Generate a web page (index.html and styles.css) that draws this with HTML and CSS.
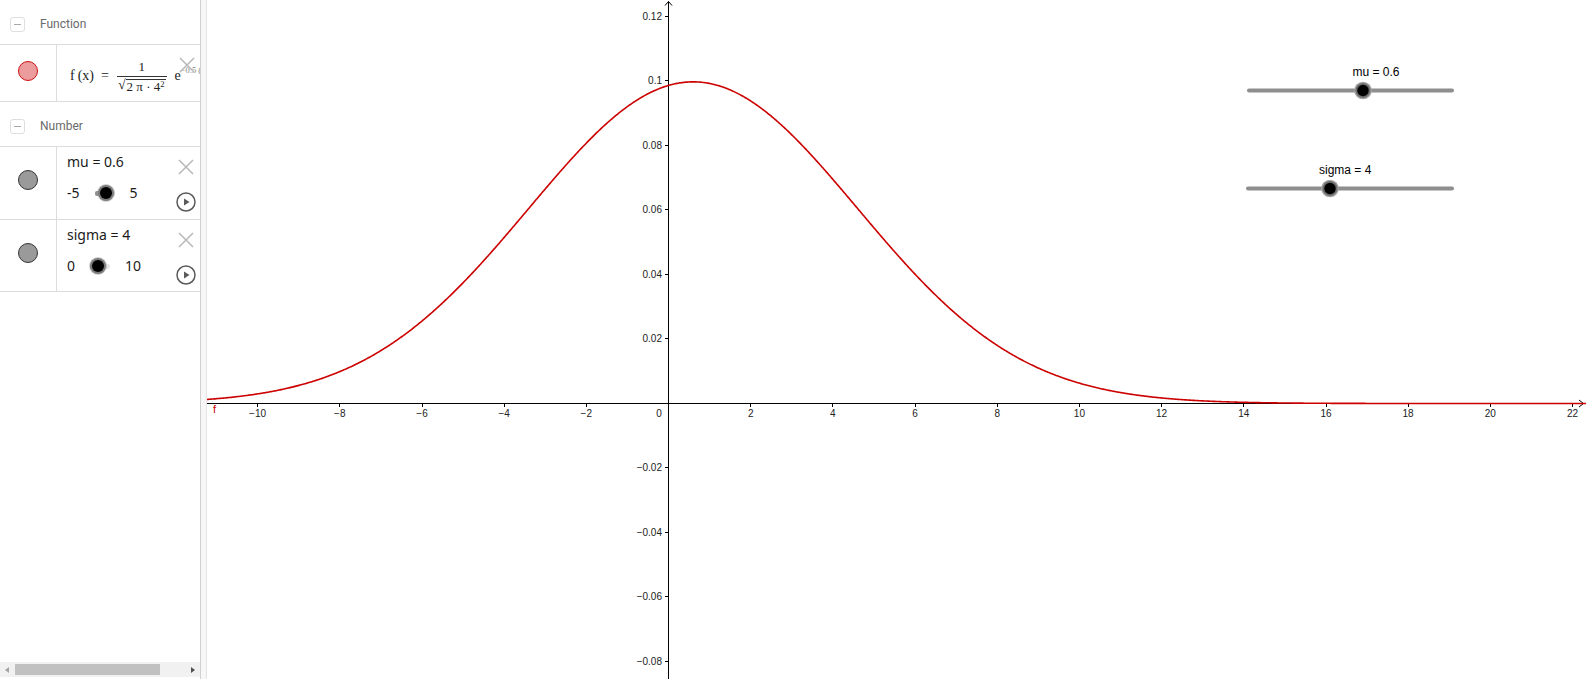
FILE: index.html
```html
<!DOCTYPE html>
<html lang="en">
<head>
<meta charset="utf-8">
<title>Normal distribution</title>
<link rel="stylesheet" href="styles.css">
</head>
<body>
<div class="app">
  <aside class="algebra">
    <div class="group-head"><span class="toggle"></span><span>Function</span></div>
    <div class="item item-fn">
      <div class="marker"><span class="dot dot-fn"></span></div>
      <div class="content">
        <div class="formula">
          <span class="f">f</span><span>(x)</span><span class="eq">=</span>
          <span class="frac">
            <span class="num">1</span>
            <span class="bar"></span>
            <span class="den"><span class="sqrt">√</span><span class="rad">2 π · 4<sup>2</sup></span></span>
          </span>
          <span class="exp">e<sup>−0.5 ((x − 0.6) / 4)</sup></span>
        </div>
      </div>
      <svg class="close close-abs" width="16" height="16" viewBox="0 0 16 16"><path d="M1 1L15 15M15 1L1 15"/></svg>
    </div>

    <div class="group-head"><span class="toggle"></span><span>Number</span></div>
    <div class="item item-num">
      <div class="marker"><span class="dot dot-num"></span></div>
      <div class="content">
        <div class="label">mu = 0.6</div>
        <div class="slider">
          <span>-5</span>
          <span class="track"><span class="track-fill" style="width:56%"></span><span class="knob" style="left:56%"></span></span>
          <span>5</span>
        </div>
      </div>
      <div class="controls">
        <svg class="close" width="16" height="16" viewBox="0 0 16 16"><path d="M1 1L15 15M15 1L1 15"/></svg>
        <svg class="play" width="20" height="20" viewBox="0 0 20 20"><circle cx="10" cy="10" r="9"/><path d="M8 6.5L13.5 10L8 13.5Z"/></svg>
      </div>
    </div>
    <div class="item item-num last">
      <div class="marker"><span class="dot dot-num"></span></div>
      <div class="content">
        <div class="label">sigma = 4</div>
        <div class="slider">
          <span>0</span>
          <span class="track"><span class="track-fill" style="width:40%"></span><span class="knob" style="left:40%"></span></span>
          <span>10</span>
        </div>
      </div>
      <div class="controls">
        <svg class="close" width="16" height="16" viewBox="0 0 16 16"><path d="M1 1L15 15M15 1L1 15"/></svg>
        <svg class="play" width="20" height="20" viewBox="0 0 20 20"><circle cx="10" cy="10" r="9"/><path d="M8 6.5L13.5 10L8 13.5Z"/></svg>
      </div>
    </div>

    <div class="fill"></div>
    <div class="hscroll">
      <span class="arrow-l"></span>
      <span class="thumb"></span>
      <span class="fill"></span>
      <span class="arrow-r"></span>
    </div>
  </aside>

  <div class="splitter"></div>

  <main class="graphics">
    <svg class="plot" width="1379" height="679" viewBox="207 0 1379 679">
      <g class="axis">
        <line x1="207" y1="403.5" x2="1583" y2="403.5"/>
        <polyline points="1579,400 1583.5,403.5 1579,407"/>
        <line x1="668.5" y1="679" x2="668.5" y2="1.5"/>
        <polyline points="665,5.5 668.5,1.5 672,5.5"/>
        <path d="M257.5 403.5v3.5M339.5 403.5v3.5M422.5 403.5v3.5M504.5 403.5v3.5M586.5 403.5v3.5M750.5 403.5v3.5M832.5 403.5v3.5M915.5 403.5v3.5M997.5 403.5v3.5M1079.5 403.5v3.5M1161.5 403.5v3.5M1243.5 403.5v3.5M1326.5 403.5v3.5M1408.5 403.5v3.5M1490.5 403.5v3.5M1572.5 403.5v3.5"/>
        <path d="M665 16.5h3.5M665 80.5h3.5M665 145.5h3.5M665 209.5h3.5M665 274.5h3.5M665 338.5h3.5M665 467.5h3.5M665 532.5h3.5M665 596.5h3.5M665 661.5h3.5"/>
      </g>
      <g class="tick-label xlab">
        <text x="257.6" y="417">−10</text>
        <text x="339.8" y="417">−8</text>
        <text x="422" y="417">−6</text>
        <text x="504.1" y="417">−4</text>
        <text x="586.3" y="417">−2</text>
        <text x="659" y="417">0</text>
        <text x="750.7" y="417">2</text>
        <text x="832.9" y="417">4</text>
        <text x="915" y="417">6</text>
        <text x="997.2" y="417">8</text>
        <text x="1079.4" y="417">10</text>
        <text x="1161.6" y="417">12</text>
        <text x="1243.8" y="417">14</text>
        <text x="1326" y="417">16</text>
        <text x="1408.1" y="417">18</text>
        <text x="1490.3" y="417">20</text>
        <text x="1572.5" y="417">22</text>
      </g>
      <g class="tick-label ylab">
        <text x="662" y="20.1">0.12</text>
        <text x="662" y="84.1">0.1</text>
        <text x="662" y="149.1">0.08</text>
        <text x="662" y="213.1">0.06</text>
        <text x="662" y="278.1">0.04</text>
        <text x="662" y="342.1">0.02</text>
        <text x="662" y="471.1">−0.02</text>
        <text x="662" y="536.1">−0.04</text>
        <text x="662" y="600.1">−0.06</text>
        <text x="662" y="665.1">−0.08</text>
      </g>
      <path id="curve" class="curve" d="M207 399"/>
      <text class="curve-name" x="213" y="413">f</text>

      <g class="gslider">
        <text class="s-label" x="1352.5" y="75.5">mu = 0.6</text>
        <line class="s-track" x1="1249" y1="90.5" x2="1452" y2="90.5"/>
        <circle class="s-halo" cx="1363" cy="90.5" r="8.8"/>
        <circle class="s-ring" cx="1363" cy="90.5" r="7.6"/>
        <circle class="s-core" cx="1363" cy="90.5" r="5.7"/>
      </g>
      <g class="gslider">
        <text class="s-label" x="1319" y="173.5">sigma = 4</text>
        <line class="s-track" x1="1248" y1="188.5" x2="1452" y2="188.5"/>
        <circle class="s-halo" cx="1330" cy="188.5" r="8.8"/>
        <circle class="s-ring" cx="1330" cy="188.5" r="7.6"/>
        <circle class="s-core" cx="1330" cy="188.5" r="5.7"/>
      </g>
    </svg>
  </main>
</div>
<script src="script.js"></script>
</body>
</html>
```

FILE: styles.css
```css
* { box-sizing: border-box; }
html, body { margin: 0; padding: 0; }
body {
  width: 1586px;
  height: 679px;
  overflow: hidden;
  background: #fff;
  font-family: "Noto Sans", "DejaVu Sans", sans-serif;
  color: #1a1a1a;
}
.app { display: flex; height: 679px; }

/* ---------- algebra view ---------- */
.algebra {
  width: 200px;
  flex: none;
  display: flex;
  flex-direction: column;
  background: #fff;
  overflow: hidden;
}
.group-head {
  height: 45px;
  flex: none;
  padding: 4px 0 0 10px;
  display: flex;
  align-items: center;
  gap: 15px;
  border-bottom: 1px solid #dcdcdc;
  font-family: Roboto, "Noto Sans", sans-serif;
  font-size: 12px;
  color: #6a6a6a;
}
.toggle {
  width: 15px;
  height: 15px;
  border: 1px solid #dedede;
  border-radius: 3px;
  display: flex;
  align-items: center;
  justify-content: center;
}
.toggle::before {
  content: "";
  width: 7px;
  height: 1px;
  background: #a8a8a8;
}
.item {
  position: relative;
  display: flex;
  flex: none;
  border-bottom: 1px solid #dcdcdc;
  overflow: hidden;
}
.item-fn { height: 57px; }
.item-num { height: 73px; }
.item-num.last { height: 72px; }
.marker {
  width: 57px;
  flex: none;
  border-right: 1px solid #dcdcdc;
  display: flex;
  justify-content: center;
  align-items: flex-start;
  padding-top: 23px;
}
.item-fn .marker { padding-top: 16px; }
.dot {
  width: 20px;
  height: 20px;
  border-radius: 50%;
}
.dot-fn { background: #ec9c9c; border: 1px solid #cc1111; }
.dot-num { background: #9a9a9a; border: 1px solid #333; }

.content {
  flex: 1;
  min-width: 0;
  padding: 5px 0 0 10px;
}
.item-fn .content {
  padding: 6px 0 0 13px;
  display: flex;
  align-items: center;
  white-space: nowrap;
}

/* formula */
.formula {
  display: flex;
  align-items: center;
  font-family: "Liberation Serif", "DejaVu Serif", serif;
  font-size: 14px;
  line-height: 14px;
  color: #222;
  white-space: nowrap;
}
.f { margin-right: 3px; }
.eq { margin: 0 8px 0 7px; }
.frac {
  display: flex;
  flex-direction: column;
  align-items: center;
  font-size: 13px;
}
.num { line-height: 14px; padding-bottom: 2px; }
.bar { align-self: stretch; height: 1px; background: #333; }
.den {
  display: flex;
  align-items: flex-start;
  padding: 2px 1px 0;
  line-height: 14px;
}
.sqrt { font-size: 14px; line-height: 14px; margin-top: -1px; }
.rad {
  border-top: 1px solid #333;
  line-height: 13px;
  padding: 0 1px;
}
.rad sup { font-size: 8.5px; line-height: 0; vertical-align: 4px; }
.exp { margin-left: 8px; }
.exp sup { font-size: 8.5px; line-height: 0; vertical-align: 7px; color: #888; }

/* numbers */
.label { font-size: 14px; line-height: 20px; }
.slider {
  display: flex;
  align-items: center;
  height: 20px;
  margin-top: 11px;
  font-size: 14px;
  line-height: 20px;
}
.track {
  position: relative;
  width: 20px;
  height: 5px;
  margin: 0 15px 0 15px;
  background: #e6e6e6;
  border-radius: 2px;
}
.track-fill {
  position: absolute;
  left: 0;
  top: 0;
  bottom: 0;
  background: #8f8f8f;
  border-radius: 2px;
}
.knob {
  position: absolute;
  top: 50%;
  width: 12px;
  height: 12px;
  margin: -6px 0 0 -6px;
  border-radius: 50%;
  background: #000;
  box-shadow: 0 0 0 2px #7b7b7b, 0 0 0 3px rgba(160, 160, 160, 0.5);
}
.controls {
  flex: none;
  width: 20px;
  margin-right: 4px;
  display: flex;
  flex-direction: column;
  align-items: center;
  padding-top: 12px;
  gap: 17px;
}
.close path { stroke: #b8b8b8; stroke-width: 1.5; fill: none; }
.close-abs { position: absolute; top: 12px; right: 5px; }
.play circle { fill: none; stroke: #5a5a5a; stroke-width: 1.5; }
.play path { fill: #5a5a5a; }

.fill { flex: 1; }
.hscroll {
  flex: none;
  height: 15px;
  margin-bottom: 2px;
  background: #f1f1f1;
  display: flex;
  align-items: center;
}
.arrow-l {
  width: 0;
  height: 0;
  border-style: solid;
  border-width: 3.5px 4px 3.5px 0;
  border-color: transparent #a3a3a3 transparent transparent;
  margin: 0 6px 0 5px;
}
.thumb { width: 145px; height: 11px; background: #c1c1c1; }
.arrow-r {
  width: 0;
  height: 0;
  border-style: solid;
  border-width: 3.5px 0 3.5px 4px;
  border-color: transparent transparent transparent #505050;
  margin-right: 5px;
}

.splitter {
  width: 7px;
  flex: none;
  background: #f7f7f7;
  border-left: 1px solid #d0d0d0;
  border-right: 1px solid #e4e4e4;
}

/* ---------- graphics view ---------- */
.graphics { flex: 1; min-width: 0; background: #fff; }
.plot { display: block; }
.axis { stroke: #000; stroke-width: 1; fill: none; }
.tick-label {
  font-family: "Liberation Sans", Arial, sans-serif;
  font-size: 10px;
  fill: #222;
}
.xlab { text-anchor: middle; }
.ylab { text-anchor: end; }
.curve { fill: none; stroke: #cc0000; stroke-width: 1.6; }
.curve-name {
  font-family: "Liberation Sans", Arial, sans-serif;
  font-size: 11px;
  fill: #cc0000;
}
.s-label {
  font-family: "Liberation Sans", Arial, sans-serif;
  font-size: 12px;
  fill: #000;
}
.s-track { stroke: #8e8e8e; stroke-width: 4; stroke-linecap: round; }
.s-halo { fill: #a6a6a6; }
.s-ring { fill: #6e6e6e; }
.s-core { fill: #000; }
```

FILE: script.js
```js
(function () {
  var x0 = 668.5, y0 = 403.5, ux = 41.09, uy = 3225;
  var mu = 0.6, s = 4;
  var k = 1 / Math.sqrt(2 * Math.PI * s * s);
  var d = '';
  for (var px = 207; px <= 1586; px += 1) {
    var x = (px - x0) / ux;
    var y = k * Math.exp(-0.5 * Math.pow((x - mu) / s, 2));
    var py = y0 - y * uy;
    d += (px === 207 ? 'M' : 'L') + px + ' ' + py.toFixed(2);
  }
  document.getElementById('curve').setAttribute('d', d);
})();
```
